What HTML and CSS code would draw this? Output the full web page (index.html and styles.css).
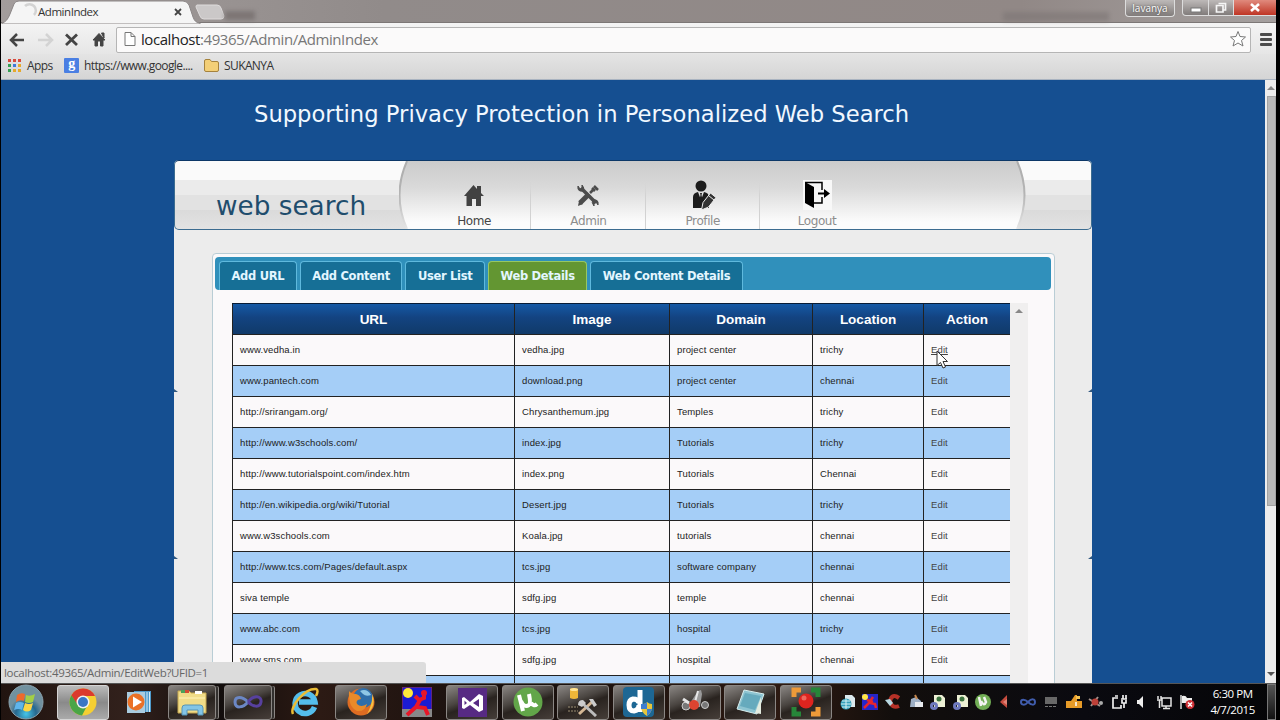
FILE: index.html
```html
<!DOCTYPE html>
<html lang="en">
<head>
	<meta charset="UTF-8">
	<title>AdminIndex</title>
	<link rel="stylesheet" href="styles.css">
</head>
<body>

<div class="titlebar">
	<svg class="tabs" width="240" height="24" viewBox="0 0 240 24">
		<path d="M1 23 Q6 22 9 14 L13 4 Q14 1 18 1 H182 Q186 1 188 5 L192 17 Q194 23 199 23 V24 H1 Z" fill="#f5f5f5" stroke="#8c8787"/>
		<path d="M196 5 H216 Q219 5 220 8 L223 16 Q223 19 220 19 H203 Q200 19 199 16 L195 7 Q195 5 196 5 Z" fill="#cbc8c8" stroke="#dedbdb"/>
		<path d="M24 6 A6 6 0 0 1 33 15" fill="none" stroke="#d3d3d3" stroke-width="2.5"/>
		<path d="M174 9 L180 15 M180 9 L174 15" stroke="#444" stroke-width="1.8"/>
	</svg>
	<span class="tab-title">AdminIndex</span>
	<i class="smudge s1"></i>
	<i class="smudge s2"></i>
	<div class="window-controls">
		<span class="user">lavanya</span>
		<span class="min"><svg width="12" height="12"><rect x="1" y="6" width="10" height="4" fill="#fff" stroke="#777"/></svg></span>
		<span class="max"><svg width="14" height="13"><path d="M4.500 2.500 H11.500 V9 H9.500 M2.500 4.500 H9 V11 H2.500 Z" fill="none" stroke="#f5f5f5" stroke-width="1.700"/></svg></span>
		<span class="close"><svg width="12" height="12"><path d="M2 2 L10 9 M10 2 L2 9" stroke="#fff" stroke-width="2.6"/></svg></span>
	</div>
</div>

<div class="toolbar">
	<svg class="nav-icons" width="115" height="30" viewBox="0 0 115 30">
		<path d="M23 17 H11 M16 11 L10 17 L16 23" fill="none" stroke="#444" stroke-width="2.5"/>
		<path d="M37 17 H50 M45 11 L51 17 L45 23" fill="none" stroke="#d3d3d3" stroke-width="2.5"/>
		<path d="M65 11.500 L76 22 M76 11.500 L65 22" stroke="#444" stroke-width="2.8"/>
		<path d="M92 17 L98 10.500 L104 17 H102 V23 H99.500 V18 H96.500 V23 H94 V17 Z M100.500 10 H103 V15 Z" fill="#444" stroke="#444"/>
	</svg>
	<div class="address">
		<svg width="12" height="16" viewBox="0 0 12 16"><path d="M1 1.500 H7 L11 5.500 V14.500 H1 Z M7 1.500 V5.500 H11" fill="#fff" stroke="#777"/></svg>
		<span><b>localhost</b>:49365/Admin/AdminIndex</span>
		<svg class="star" width="18" height="18" viewBox="0 0 18 18"><path d="M9 1.500 L11 6.500 L16.500 7 L12.500 10.500 L14 16 L9 13 L4 16 L5.500 10.500 L1.500 7 L7 6.500 Z" fill="#fff" stroke="#777"/></svg>
	</div>
	<div class="menu"><i></i><i></i><i></i></div>
</div>

<div class="bookmarks">
	<svg width="14" height="14" viewBox="0 0 14 14">
		<g fill="#d84a3c"><path d="M0 0h3v3H0zM5 0h3v3H5zM10 0h3v3H10z"/></g>
		<path d="M0 5h3v3H0z" fill="#35a052"/><path d="M5 5h3v3H5z" fill="#4079d8"/><path d="M10 5h3v3H10z" fill="#e7a92b"/>
		<path d="M0 10h3v3H0z" fill="#35a052"/><path d="M5 10h3v3H5zM10 10h3v3H10z" fill="#e7a92b"/>
	</svg>
	<span class="apps">Apps</span>
	<span class="google">g</span>
	<span class="link">https://www.google....</span>
	<svg width="15" height="13" viewBox="0 0 15 13"><path d="M.5 2 Q.5 .5 2 .5 H6 L7.500 2.500 H13 Q14.500 2.500 14.500 4 V11 Q14.500 12.500 13 12.500 H2 Q.5 12.500 .5 11 Z" fill="#f3cf77" stroke="#a5823d"/></svg>
	<span class="folder">SUKANYA</span>
</div>

<div class="viewport">
	<div class="page">
		<h1>Supporting Privacy Protection in Personalized Web Search</h1>

		<div class="container">
			<div class="header">
				<div class="logo">web search</div>
				<svg class="menu-shape" width="627" height="68" viewBox="0 0 628 68" preserveAspectRatio="none">
					<defs>
						<linearGradient id="silver" x2="0" y2="1"><stop offset="0" stop-color="#cbcbcb"/><stop offset=".4" stop-color="#dadada"/><stop offset=".9" stop-color="#fcfcfc"/></linearGradient>
						<linearGradient id="edge" x2="0" y2="1"><stop offset="0" stop-color="#adadad"/><stop offset=".5" stop-color="#b4b4b4"/><stop offset="1" stop-color="#e6e6e6"/></linearGradient>
					</defs>
					<path d="M8 0 Q-7 34 8 68 H619 Q634 34 619 0 Z" fill="url(#silver)"/>
					<path d="M8 0 Q-7 34 8 68 M619 0 Q634 34 619 68" fill="none" stroke="url(#edge)" stroke-width="2"/>
				</svg>
				<ul class="menu-top">
					<li class="active">
						<svg width="22" height="24" viewBox="0 0 22 24"><path d="M1 13 L10.500 2 L14 6 V3 H18 V10 L21 13 H18 V23 H13 V16 H9 V23 H3.500 V13 Z" fill="#424242"/></svg>
						<span>Home</span>
					</li>
					<li>
						<svg width="24" height="24" viewBox="0 0 24 24">
							<path d="M5 5 L20 20" stroke="#4c4c4c" stroke-width="3.500"/>
							<path d="M2 3 Q1 9 7 8 Q9 5 6 2 L6 5 L4 6 Z M22 22 Q23 16 17 17 Q15 19 18 23 L18 20 L20 19 Z" fill="#4c4c4c" stroke="#4c4c4c"/>
							<path d="M4 20 L13 11" stroke="#4c4c4c" stroke-width="5"/>
							<path d="M14 10 L18 6" stroke="#4c4c4c" stroke-width="2.500"/>
							<path d="M16 5 L19 8 M18 3 L22 7" stroke="#4c4c4c" stroke-width="2.500"/>
							<path d="M2 23 L3 18 L7 21 Z" fill="#4c4c4c"/>
						</svg>
						<span>Admin</span>
					</li>
					<li>
						<svg width="26" height="30" viewBox="0 0 26 30">
							<circle cx="11" cy="6" r="5.500" fill="#1c1c1c"/>
							<path d="M3 28 V17 Q3 13 8 12 L11 20 L14 12 Q19 13 19 17 V28 Z" fill="#1c1c1c"/>
							<path d="M10 13 H12 L11.500 15 L12.500 20 L11 22 L9.500 20 L10.500 15 Z" fill="#1c1c1c"/>
							<path d="M11.500 30 L13 22.500 L20.500 13 L26 17.500 L18.500 27 Z" fill="#333" stroke="#eee"/>
							<path d="M18.500 15.500 L24 20" stroke="#eee"/>
						</svg>
						<span>Profile</span>
					</li>
					<li>
						<svg width="29" height="30" viewBox="0 0 29 30">
							<rect width="29" height="30" fill="#f8f8f8"/>
							<path d="M2 2 L11 7 V28 L2 23 Z" fill="#000"/>
							<path d="M2 2.500 H19 V10 M19 17 V23 H11" fill="none" stroke="#000" stroke-width="1.500"/>
							<path d="M15 12.500 H21 V9 L27 13.500 L21 18 V14.500 H15 Z" fill="#000"/>
						</svg>
						<span>Logout</span>
					</li>
				</ul>
			</div>

			<i class="notch n1"></i>
			<i class="notch n2"></i>

			<div class="panel">
				<div class="tabbar">
					<a>Add URL</a>
					<a>Add Content</a>
					<a>User List</a>
					<a class="selected">Web Details</a>
					<a>Web Content Details</a>
				</div>
				<div class="scroller">
					<table>
						<thead>
							<tr><th class="url">URL</th><th class="image">Image</th><th class="domain">Domain</th><th class="location">Location</th><th class="action">Action</th></tr>
						</thead>
						<tbody>
							<tr><td>www.vedha.in</td><td>vedha.jpg</td><td>project center</td><td>trichy</td><td><a class="hover">Edit</a></td></tr>
							<tr><td>www.pantech.com</td><td>download.png</td><td>project center</td><td>chennai</td><td><a>Edit</a></td></tr>
							<tr><td>http://srirangam.org/</td><td>Chrysanthemum.jpg</td><td>Temples</td><td>trichy</td><td><a>Edit</a></td></tr>
							<tr><td>http://www.w3schools.com/</td><td>index.jpg</td><td>Tutorials</td><td>trichy</td><td><a>Edit</a></td></tr>
							<tr><td>http://www.tutorialspoint.com/index.htm</td><td>index.png</td><td>Tutorials</td><td>Chennai</td><td><a>Edit</a></td></tr>
							<tr><td>http://en.wikipedia.org/wiki/Tutorial</td><td>Desert.jpg</td><td>Tutorials</td><td>trichy</td><td><a>Edit</a></td></tr>
							<tr><td>www.w3schools.com</td><td>Koala.jpg</td><td>tutorials</td><td>chennai</td><td><a>Edit</a></td></tr>
							<tr><td>http://www.tcs.com/Pages/default.aspx</td><td>tcs.jpg</td><td>software company</td><td>chennai</td><td><a>Edit</a></td></tr>
							<tr><td>siva temple</td><td>sdfg.jpg</td><td>temple</td><td>chennai</td><td><a>Edit</a></td></tr>
							<tr><td>www.abc.com</td><td>tcs.jpg</td><td>hospital</td><td>trichy</td><td><a>Edit</a></td></tr>
							<tr><td>www.sms.com</td><td>sdfg.jpg</td><td>hospital</td><td>chennai</td><td><a>Edit</a></td></tr>
							<tr><td></td><td></td><td></td><td></td><td></td></tr>
						</tbody>
					</table>
					<div class="inner-scroll"><i class="up"></i></div>
				</div>
			</div>
		</div>
	</div>
	<div class="scrollbar"><i class="up"></i><div class="thumb"></div><i class="down"></i></div>
	<div class="status">localhost:49365/Admin/EditWeb?UFID=1</div>
	<svg class="cursor" width="13" height="20" viewBox="0 0 13 20"><path d="M1 1 V15.500 L4.500 12.500 L7 18 L9.500 17 L7 11.500 H11.500 Z" fill="#fff" stroke="#333"/></svg>
</div>

<div class="taskbar">
	<svg class="start" width="36" height="36" viewBox="0 0 36 36">
		<defs><radialGradient id="orb" cy=".85"><stop offset="0" stop-color="#46c5e8"/><stop offset=".6" stop-color="#27688f"/><stop offset="1" stop-color="#71919f"/></radialGradient></defs>
		<circle cx="18" cy="18" r="17" fill="url(#orb)" stroke="#8ba3af"/>
		<path d="M9 11 Q13 8 17 10 L16 17 Q12 15 8 18 Z" fill="#ee6a2c"/>
		<path d="M18 11 Q22 13 27 10 L25 18 Q21 20 17 18 Z" fill="#a3cf46"/>
		<path d="M8 19 Q12 17 16 19 L14 26 Q11 24 6 26 Z" fill="#5fb5ec"/>
		<path d="M17 19 Q21 21 25 19 L23 26 Q19 29 15 26 Z" fill="#fbd545"/>
	</svg>
	<div class="tasks">
		<span class="btn lit"><svg width="28" height="28" viewBox="0 0 28 28">
			<circle cx="14" cy="14" r="13.500" fill="#f5cf32"/>
			<path d="M2.300 7.200 A13.500 13.500 0 0 1 26 8 H14 L8 17 Z" fill="#db3a2d"/>
			<path d="M2.300 7.200 A13.500 13.500 0 0 0 13 27.500 L18 18 L9 17 Z" fill="#4aa547"/>
			<circle cx="14" cy="14" r="6.500" fill="#f2f2f2"/><circle cx="14" cy="14" r="5" fill="#3976c5"/>
		</svg></span>
		<span><svg width="26" height="26" viewBox="0 0 26 26"><path d="M8 2 H25 V23 H8 Z" fill="#4f9bcc"/><path d="M1 3 H19 V24 H1 Z" fill="#a9cce0"/><path d="M21 3 V23 M23.500 3 V23" stroke="#d5edf8"/><circle cx="10" cy="13" r="8.500" fill="#ea7127"/><path d="M7 7.500 L16 13 L7 18.500 Z" fill="#fff"/></svg></span>
		<span class="btn stack"><svg width="30" height="28" viewBox="0 0 30 28"><path d="M1 3 H12 L14 5 H29 V25 H1 Z" fill="#f0dc88" stroke="#c5a751"/><path d="M4 2 H12 V5 H4 Z" fill="#4aa25a"/><path d="M8 2 H12 V5 H8 Z" fill="#d34b33"/><path d="M18 3 H25 V6 H18 Z" fill="#fff"/><path d="M2 10 H28" stroke="#fff4b9"/><path d="M5 27 V20 Q5 17 8 17 H23 Q26 17 26 20 V27 H21 V22 H10 V27 Z" fill="#83c5e6" stroke="#5595b7"/></svg></span>
		<span class="btn stack"><svg width="32" height="20" viewBox="0 0 32 20"><path d="M16 10 C11 16 3 17 3 10 C3 4 10 4 16 10" fill="none" stroke="#6b87c5" stroke-width="3"/><path d="M16 10 C22 2 30 4 29 10 C28 16 21 15 16 10" fill="none" stroke="#57409e" stroke-width="3"/></svg></span>
		<span><svg width="30" height="30" viewBox="0 0 30 30"><path d="M24.500 20 A10 10 0 1 1 25 15 H9" fill="none" stroke="#54bdec" stroke-width="5.500"/><path d="M3 27 C-1 20 15 1 26 2 Q29 3 26 9" fill="none" stroke="#ebbd36" stroke-width="2.500"/></svg></span>
		<span class="btn"><svg width="30" height="30" viewBox="0 0 30 30"><circle cx="15" cy="15" r="13.500" fill="#de6c22"/><circle cx="17" cy="11" r="10" fill="#2f6ea9"/><path d="M14 4 Q21 1 25 8 Q20 10 17 7 Z" fill="#8fc7e5"/><path d="M3 4 Q5 7 10 7 Q14 8 15 12 Q9 13 11 17 Q15 21 21 17 Q19 25 11 24 Q2 20 3 4 Z" fill="#e98a29"/><path d="M26 7 Q31 19 21 27 Q27 17 26 7 Z" fill="#f6c141"/></svg></span>
		<span><svg width="30" height="30" viewBox="0 0 30 30"><rect width="30" height="30" fill="#1b1bd3" stroke="#a42c35"/><path d="M0 22 H30 V30 H0 Z" fill="#888"/><circle cx="6" cy="6" r="5" fill="#ffe93b"/><path d="M13 9 L17 13 L22 11 V5 M18 13 L14 20 L5 28 M15 20 L23 21 L26 28" fill="none" stroke="#e81627" stroke-width="4"/><circle cx="22" cy="6" r="3" fill="#e81627"/></svg></span>
		<span class="btn"><svg width="29" height="29" viewBox="0 0 29 29"><rect width="29" height="29" fill="#572a83"/><path d="M4 10 L6 9 L12 14 L21 6 L25 8 V22 L21 24 L12 17 L6 21 L4 20 Z M6.500 12.500 V17 L9 15 Z M21 11 L15 15 L21 19 Z" fill="#fff" fill-rule="evenodd"/></svg></span>
		<span class="btn"><svg width="32" height="30" viewBox="0 0 32 30"><circle cx="16" cy="15" r="14.500" fill="#62a649"/><path d="M7 8 L11 24 M9 14 Q12 21 17 18 Q19 17 17 7 M19 16 Q22 20 25 17" fill="none" stroke="#fff" stroke-width="4"/></svg></span>
		<span class="btn"><svg width="30" height="30" viewBox="0 0 30 30"><path d="M2 2 Q6 0 10 2 V11 Q6 13 2 11 Z" fill="#efb739"/><ellipse cx="6" cy="2.500" rx="4" ry="1.500" fill="#ffe496"/><path d="M0 20 H10 M0 24 H10" stroke="#9c8f74" stroke-dasharray="2 1"/><path d="M11 27 L24 15" stroke="#d4b795" stroke-width="3"/><path d="M14 16 L28 29" stroke="#bcbcbc" stroke-width="3"/><path d="M10 18 Q10 13 15 13 L18 16 L14 20 Z M21 12 L25 12 L29 18 L26 20 Z" fill="#ccc"/></svg></span>
		<span class="btn"><svg width="31" height="30" viewBox="0 0 31 30"><rect width="31" height="30" rx="4" fill="#1d6794"/><path d="M17 3 V25 M16 16 Q15 12 10 12 Q6 13 6 18 Q6 24 11 24 Q16 23 16 18" fill="none" stroke="#fff" stroke-width="5"/><path d="M18 17 Q23 17 24 15 Q26 17 29 17 Q30 25 24 29 Q17 25 18 17 Z" fill="#e7c53b"/><path d="M18 17 Q23 17 24 15 V22 H18 Z M24 22 H29 Q28 26 24 29 Z" fill="#3d7ed0"/></svg></span>
		<span class="btn"><svg width="30" height="28" viewBox="0 0 30 28"><path d="M12 12 L18 3 L21 2 L22 6 L20 19 L9 20 Z" fill="#9a9a9a"/><path d="M18 3 L15 14" stroke="#e8e8e8" stroke-width="2"/><circle cx="6" cy="18" r="4" fill="#777" stroke="#ccc"/><circle cx="25" cy="17" r="3.500" fill="#777" stroke="#ccc"/><circle cx="14" cy="17" r="5" fill="#dc4431"/><path d="M3 11 L9 15" stroke="#e6e6e6" stroke-width="3"/></svg></span>
		<span class="btn"><svg width="30" height="28" viewBox="0 0 30 28"><path d="M9 2 L29 6 L22 26 L2 21 Z" fill="#8dc4d1" stroke="#d8eeee"/><path d="M10 5 L26 8 L20 22 L5 18 Z" fill="#66aabd"/><path d="M26 9 V26 L20 25 Z" fill="#e3ebdf"/></svg></span>
		<span class="btn"><svg width="30" height="30" viewBox="0 0 30 30"><path d="M10 3 H3 V10 M27 20 V27 H20" fill="none" stroke="#ed9a39" stroke-width="5"/><path d="M20 3 H27 V10 M3 20 V27 H10" fill="none" stroke="#268639" stroke-width="5"/><circle cx="15" cy="14" r="7.500" fill="#df241f"/><circle cx="13" cy="11" r="2.500" fill="#ef675d"/></svg></span>
	</div>
	<div class="tray">
		<svg viewBox="0 0 16 16"><path d="M5 1 H12 L15 4 V13 H5 Z" fill="#dce9ed"/><circle cx="6" cy="10" r="5.500" fill="#36a0ba"/><path d="M1 10 H11 M6 5 V15 M2 7 H10 M2 13 H10" stroke="#d4f2f5"/></svg>
		<svg viewBox="0 0 16 16"><rect width="16" height="16" fill="#2626ca"/><circle cx="3" cy="3" r="3" fill="#ffe645"/><path d="M11 3 L7 9 L2 14 M8 9 L13 10 L14 14 M5 6 L11 8" stroke="#e8252c" stroke-width="2.500" fill="none"/></svg>
		<svg viewBox="0 0 16 16"><path d="M14 4 Q7 -1 5 7 Q7 15 14 12" fill="none" stroke="#b53127" stroke-width="4"/><path d="M0 6 L5 5 L8 9 L5 12 Z" fill="#b7d7e1"/></svg>
		<svg viewBox="0 0 16 16"><path d="M3 5 L8 3 L13 7 V13 H2 Z" fill="#9eb0c5"/><path d="M7 1 L9 5" stroke="#c7884e" stroke-width="2"/><rect x="7" y="8" width="8" height="5" fill="#e8ebef"/></svg>
		<svg viewBox="0 0 16 16"><path d="M4 1 H12 L15 4 V13 H4 Z" fill="#edf0d5"/><circle cx="9" cy="5" r="2.500" fill="#3b733e"/><circle cx="4" cy="12" r="2.500" fill="none" stroke="#6e79bd" stroke-width="3"/></svg>
		<svg viewBox="0 0 16 16"><path d="M4 1 H12 L15 4 V13 H4 Z" fill="#edf0d5"/><circle cx="9" cy="5" r="2.500" fill="#3b733e"/><circle cx="4" cy="12" r="2.500" fill="none" stroke="#6e79bd" stroke-width="3"/></svg>
		<svg viewBox="0 0 16 16"><circle cx="8" cy="8" r="8" fill="#71ad55"/><path d="M4 3 L6 12 M6 7 Q9 13 11 8 L9 3" fill="none" stroke="#f3f3f3" stroke-width="2.500"/></svg>
		<svg viewBox="0 0 16 16"><path d="M2 8 L9 1 V14 Z" fill="#c44a3d"/><path d="M5 8 L9 5 V11 Z" fill="#df8376"/></svg>
		<svg viewBox="0 0 16 16"><path d="M8 8 C5 12 1 11 1 8 C1 5 5 5 8 8 C12 4 15 5 15 8 C15 12 11 11 8 8" fill="none" stroke="#405cac" stroke-width="2"/></svg>
		<svg viewBox="0 0 16 16"><rect x="2" y="3" width="12" height="7" fill="#686868"/><path d="M2 12.500 H14" stroke="#777" stroke-dasharray="3 1"/></svg>
		<svg viewBox="0 0 16 16"><path d="M0 7 H5 L9 1 H11 V7 H16 V14 H0 Z" fill="#e79b28"/><path d="M10 2 H14 V5 H10 Z" fill="#f3c353"/><path d="M10 8 V12" stroke="#fff" stroke-width="1.500"/></svg>
		<svg viewBox="0 0 16 16"><path d="M1 5 L12 12 M3 12 L10 3" stroke="#a3938d" stroke-width="2"/><circle cx="7" cy="8" r="3.500" fill="#bd4139"/><circle cx="13" cy="9" r="2" fill="#aaa"/></svg>
		<svg viewBox="0 0 16 16"><path d="M7 4 H2 V14 H10 V11 M4 2 H7 M12 1 V5 M15 1 V5 M10 5 H16 M11 6 V9 H15 V6 M13 9 V14" fill="none" stroke="#eee" stroke-width="1.700"/></svg>
		<svg viewBox="0 0 16 16"><path d="M4 6 H6 L10 2 V14 L6 10 H4 Z" fill="#eee"/></svg>
		<svg viewBox="0 0 16 16"><path d="M6 4 H15 V12 H6 Z M10 12 V14 M7 14.500 H14 M2 2 V5 M5 2 V5 M1 6 H6 M3.500 6 V14" fill="none" stroke="#e5e5e5" stroke-width="1.500"/></svg>
		<svg viewBox="0 0 16 16"><path d="M2 1 V15" stroke="#ddd" stroke-width="1.500"/><path d="M3 2 Q7 1 8 4 H13 V9 H3 Z" fill="#eee"/><circle cx="11" cy="10.500" r="4.500" fill="#cf3036"/><path d="M9 8.500 L13 12.500 M13 8.500 L9 12.500" stroke="#fff" stroke-width="1.500"/></svg>
	</div>
	<div class="clock">6:30 PM<br>4/7/2015</div>
	<div class="show-desktop"></div>
</div>

</body>
</html>
```

FILE: styles.css
```css
* {
	box-sizing: border-box;
}

body {
	margin: 0;
	width: 1280px;
	height: 720px;
	overflow: hidden;
	display: flex;
	flex-direction: column;
	padding: 0 4px 0 1px;
	background: #000;
	font-family: "Open Sans", sans-serif;
}

.titlebar {
	height: 23px;
	flex: none;
	position: relative;
	display: flex;
	justify-content: space-between;
	background: linear-gradient(90deg, #a39d9c, #918b8a 30%, #918886 80%, #a5a09f);
	border-bottom: 1px solid #7c7776;
}

.tabs {
	position: absolute;
	left: 0;
	top: 0;
}

.tab-title {
	position: relative;
	margin-left: 37px;
	font: 11.5px/24px "Open Sans", sans-serif;
	letter-spacing: -0.45px;
	color: #333;
}

/* window behind, seen through the glass */
.smudge {
	position: absolute;
	height: 9px;
	background: #7d7675;
	filter: blur(2px);
}

.s1 {
	left: 224px;
	top: 11px;
	width: 30px;
}

.s2 {
	left: 1002px;
	top: 12px;
	width: 106px;
	opacity: 0.6;
}

.window-controls {
	display: flex;
	align-items: flex-start;
}

.window-controls span {
	height: 16px;
	border: 1px solid #ddd;
	border-top: 0;
	display: flex;
	align-items: center;
	justify-content: center;
	background: linear-gradient(#bdb9b8, #817c7b);
}

.window-controls .user {
	width: 50px;
	height: 17px;
	margin-right: 7px;
	border-radius: 0 0 4px 4px;
	font-size: 10px;
	color: #fff;
	text-shadow: 0 0 2px #333;
}

.window-controls .min {
	width: 27px;
	border-radius: 0 0 0 4px;
}

.window-controls .max {
	width: 25px;
	border-left: 0;
}

.window-controls .close {
	width: 42px;
	border-left: 0;
	border-right: 0;
	background: linear-gradient(#e08a7d, #bf3524);
}

.toolbar {
	height: 31px;
	flex: none;
	display: flex;
	background: linear-gradient(#f4f4f4, #e6e6e6);
}

.address {
	width: 1135px;
	height: 26px;
	margin-top: 4px;
	padding: 0 3px 2px 7px;
	display: flex;
	align-items: center;
	border: 1px solid #b5b5b5;
	border-radius: 2px;
	background: #fbfafa;
	font-size: 15px;
	letter-spacing: -0.43px;
	color: #777;
}

.address span {
	margin-left: 5px;
}

.address b {
	font-weight: normal;
	color: #222;
}

.address .star {
	margin-left: auto;
}

.menu {
	width: 12px;
	margin: 10px 0 0 9px;
}

.menu i {
	display: block;
	height: 3px;
	margin-bottom: 2px;
	border-radius: 1px;
	background: #4b4b4b;
}

.bookmarks {
	height: 26px;
	flex: none;
	display: flex;
	align-items: center;
	padding: 0 0 2px 7px;
	background: linear-gradient(#e4e4e4, #d5d5d5);
	border-bottom: 1px solid #a9b3c0;
	font-size: 12px;
	letter-spacing: -0.6px;
	color: #333;
}

.apps {
	width: 37px;
	margin-left: 5px;
}

.google {
	width: 15px;
	height: 15px;
	border-radius: 1px;
	background: #4a7fe3;
	color: #fff;
	font: bold 14px/12px "Liberation Serif", serif;
	text-align: center;
}

.link {
	width: 120px;
	margin-left: 5px;
}

.folder {
	margin-left: 5px;
}

.viewport {
	height: 603px;
	flex: none;
	position: relative;
	overflow: hidden;
	display: flex;
}

.page {
	width: 1264px;
	background: #154f91;
}

h1 {
	margin: 21px 0 0 253px;
	font: 22.670px/27px "DejaVu Sans", Verdana, sans-serif;
	color: #f1f8ff;
	white-space: nowrap;
}

.container {
	position: relative;
	width: 918px;
	height: 530px;
	margin: 32px 0 0 173px;
	padding-left: 1px;
	border-radius: 5px 5px 0 0;
	background: #ececec;
}

.header {
	height: 70px;
	margin-left: -1px;
	display: flex;
	border: 1px solid #3c6c90;
	border-top-color: #0c3767;
	border-radius: 5px;
	background: linear-gradient(#fafafa 19px, #ebebeb 19px, #ebebeb 34px, #e2e2e2 34px, #e2e2e2 49px, #dadada 49px, #e3e3e3);
	position: relative;
}

.logo {
	width: 224px;
	padding: 28px 0 0 41px;
	font: 26.300px/34px "DejaVu Sans", Verdana, sans-serif;
	color: #1f4d6d;
	white-space: nowrap;
}

.menu-shape {
	position: absolute;
	left: 224px;
	top: 0;
}

.menu-top {
	width: 627px;
	margin: 0;
	padding: 0 0 0 18px;
	display: flex;
	list-style: none;
}

.menu-top li {
	position: relative;
	width: 114.300px;
	padding-top: 19px;
	display: flex;
	flex-direction: column;
	align-items: center;
	font: 12px/15px "DejaVu Sans", Verdana, sans-serif;
	letter-spacing: -0.4px;
	color: #8d8d8d;
	background: linear-gradient(transparent 30%, #d2d2d2 50%) right / 1px 100% no-repeat;
}

.menu-top li:last-child {
	background: none;
}

.menu-top svg {
	height: 30px;
}

.menu-top span {
	margin-top: 4px;
}

.menu-top .active {
	color: #444;
}

.notch::before,
.notch::after {
	content: "";
	position: absolute;
	border: solid transparent;
	border-bottom-color: #31587f;
}

.notch::before {
	left: 0;
	border-width: 0 4px 3px 0;
}

.notch::after {
	right: 0;
	border-width: 0 0 3px 4px;
}

.n1::before,
.n1::after {
	top: 229px;
}

.n2::before,
.n2::after {
	top: 396px;
}

.panel {
	width: 843px;
	height: 480px;
	margin: 23px 0 0 37px;
	padding: 3px 3px 0 2px;
	border: 1px solid #b9cdd5;
	border-radius: 4px;
	background: #fbf9fa;
}

.tabbar {
	height: 33px;
	padding: 4px 0 0 4px;
	display: flex;
	gap: 3px;
	border-radius: 4px;
	background: #3090bb;
}

.tabbar a {
	height: 29px;
	padding: 0 11.5px;
	border: 1px solid #5fb9dd;
	border-bottom: 0;
	border-radius: 4px 4px 0 0;
	background: #166f96;
	font: bold 11.5px/28px "DejaVu Sans", Verdana, sans-serif;
	letter-spacing: -0.3px;
	color: #e3f6ff;
	white-space: nowrap;
}

.tabbar .selected {
	background: #639632;
	border-color: #97c763;
}

.scroller {
	display: flex;
	margin: 13px 0 0 17px;
}

table {
	width: 778px;
	table-layout: fixed;
	border-collapse: separate;
	border-spacing: 0;
	border-top: 1px solid #071c36;
	font-family: "Liberation Sans", Arial, sans-serif;
}

th,
td {
	height: 31px;
	padding: 0;
	border-left: 1px solid #222;
	border-bottom: 1px solid #222;
}

th {
	background: linear-gradient(#1559a5, #134381 45%, #103a69);
	font-size: 13.5px;
	color: #fff;
}

td {
	padding: 0 0 2px 7px;
	font-size: 9.5px;
	letter-spacing: 0.13px;
	color: #222;
	background: #fbf9fa;
}

tr:nth-child(even) td {
	background: #a5cef7;
}

td a {
	color: #444;
}

td a.hover {
	text-decoration: underline;
}

.url { width: 282px; }
.image { width: 155px; }
.domain { width: 143px; }
.location { width: 111px; }
.action { width: 87px; }

.inner-scroll {
	width: 18px;
	background: #f0efef;
}

.up,
.down {
	display: block;
	width: 0;
	height: 0;
	margin: 6px auto 0;
	border: 4px solid transparent;
	border-top: 0;
	border-bottom-color: #888;
}

.scrollbar {
	width: 11px;
	display: flex;
	flex-direction: column;
	background: #ededed;
	overflow: hidden;
}

.thumb {
	width: 9px;
	height: 410px;
	margin: 6px 0 0 2px;
	background: #b9b9b9;
	border: 1px solid #a3a3a3;
}

.scrollbar .down {
	margin-top: auto;
	margin-bottom: 7px;
	border: 4px solid transparent;
	border-bottom: 0;
	border-top-color: #555;
}

.status {
	position: absolute;
	left: 0;
	bottom: 0;
	width: 425px;
	height: 21px;
	padding-left: 3px;
	border-radius: 0 3px 0 0;
	background: #dcdcdc;
	font-size: 11.5px;
	line-height: 21px;
	letter-spacing: -0.33px;
	color: #666;
}

.cursor {
	position: absolute;
	left: 935px;
	top: 270px;
}

.taskbar {
	flex: 1;
	display: flex;
	align-items: center;
	border-top: 1px solid #565656;
	background: linear-gradient(90deg, #211410, #32211c 10%, #120d0c 17%, #2c1a14 25%, #160f0d 40%, #2d1a12 62%, #120e0c 70%, #0a0a10 85%, #050507);
}

.start {
	flex: none;
	margin: 0 13px 0 7px;
}

.tasks {
	flex: none;
	display: flex;
	gap: 3.600px;
}

.tasks span {
	width: 52px;
	height: 35px;
	display: flex;
	align-items: center;
	justify-content: center;
	border-radius: 3px;
}

.tasks .btn {
	border: 1px solid #8b8784;
	background: linear-gradient(160deg, #8a8683, #4a4541 40%, #29231f 55%, #463e39);
}

.tasks .lit {
	border-color: #d5d5d5;
	background: linear-gradient(#bbb, #8a8a8a 50%, #aaa);
}

.tasks .stack {
	width: 48px;
	margin-right: 4px;
	box-shadow: 3px 0 0 -1px #33302e, 4px 0 0 -1px #8b8784;
}

.tray {
	flex: none;
	display: flex;
	gap: 6.600px;
	margin-left: 8px;
}

.tray svg {
	width: 16px;
	height: 16px;
}

.clock {
	width: 60px;
	margin: 0 0 1px 8px;
	text-align: center;
	font-size: 11.5px;
	line-height: 16px;
	letter-spacing: -0.45px;
	color: #fff;
}

.show-desktop {
	width: 9px;
	height: 36px;
	margin-left: auto;
	border: 1px solid #777;
	background: linear-gradient(#555, #111);
}
```
